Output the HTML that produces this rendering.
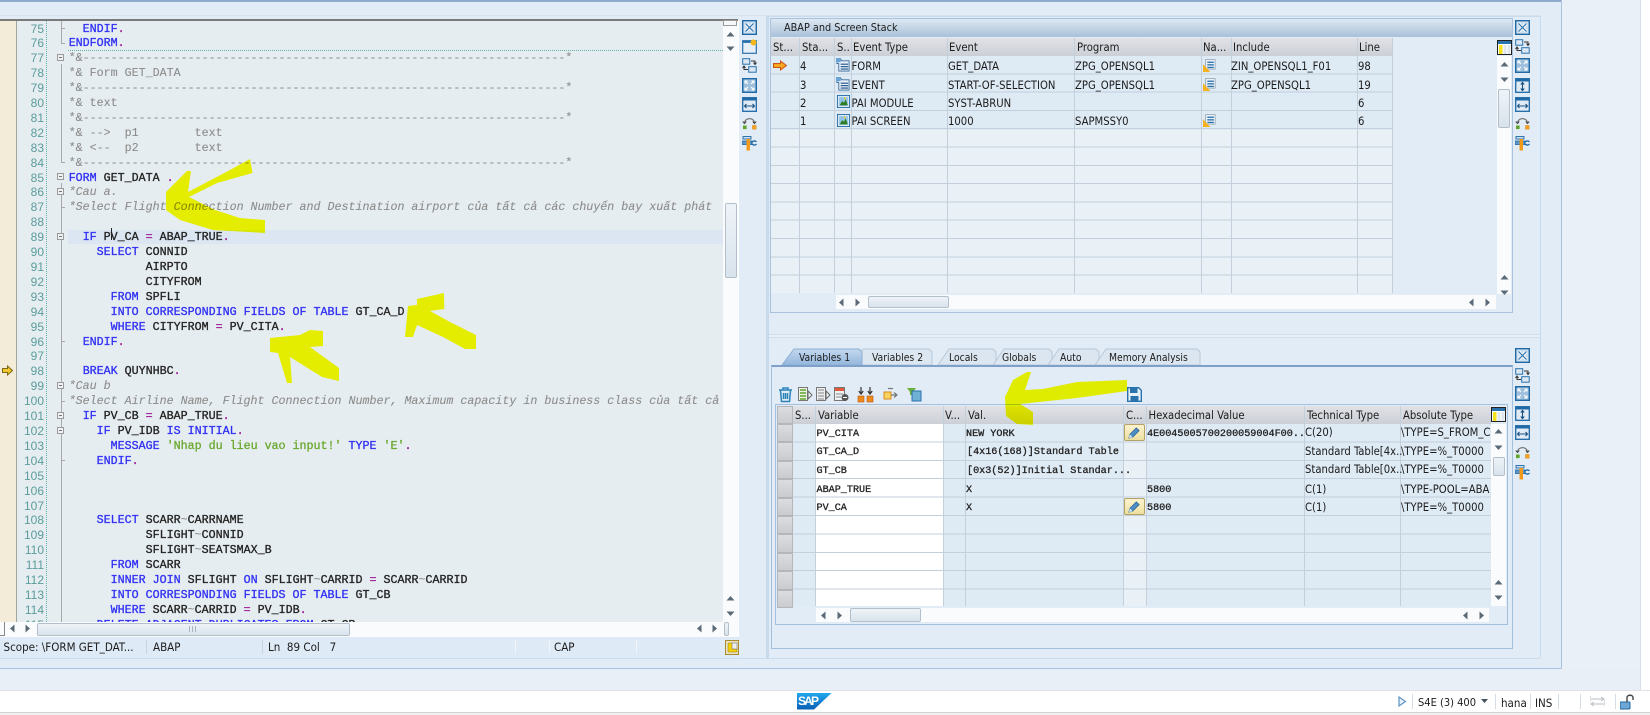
<!DOCTYPE html>
<html><head><meta charset="utf-8"><style>
html,body{margin:0;padding:0;width:1650px;height:715px;overflow:hidden;background:#fff}
body{position:relative;font-family:"DejaVu Sans Condensed","DejaVu Sans","Liberation Sans",sans-serif;font-stretch:condensed;font-size:11px;color:#222}
.a{position:absolute}
.t{position:absolute;line-height:14px;white-space:nowrap;font-size:11.2px;color:#1c1c1c}
.m{position:absolute;line-height:14px;white-space:pre;font:10.15px/14px "Liberation Mono",monospace;-webkit-text-stroke:.3px #222}
svg.i{position:absolute;width:15px;height:15px;overflow:visible}
svg.s{position:absolute;width:9px;height:9px}
pre{margin:0;font:11.67px/14.91px "Liberation Mono",monospace;color:#222;-webkit-text-stroke:.3px currentColor}
.k{color:#2f2ff5}.p{color:#a0209a}.c{color:#8c8c8c;font-style:italic;-webkit-text-stroke:.1px #8c8c8c}.h{color:#8c8c8c;-webkit-text-stroke:.1px #8c8c8c}.g{color:#6aa82e}
.btn{position:absolute;background:#f4f6f8}
.thumb{position:absolute;background:linear-gradient(#eef3f8,#d9e3ec);border:1px solid #b3c0cc;border-radius:2px;box-sizing:border-box}
.vl{position:absolute;width:1px;background:#c3cfdb}
.sel{position:absolute;left:777px;width:15.5px;height:18.4px;background:linear-gradient(#dcdde0,#c9cbd0);border:1px solid #b4b6ba;box-sizing:border-box}
.sep{position:absolute;width:1px;background:#d5dce4}
.tb{font-size:10.3px}
</style></head><body>
<svg width="0" height="0" style="position:absolute">
<defs>
<symbol id="close" viewBox="0 0 15 15"><rect x=".7" y=".7" width="13.6" height="13.6" fill="#cfe0ef" stroke="#1f69a6" stroke-width="1.4"/><path d="M3.5 3.5l8 8M11.5 3.5l-8 8" stroke="#fff" stroke-width="3"/><path d="M3.5 3.5l8 8M11.5 3.5l-8 8" stroke="#3b7db5" stroke-width="1.3"/></symbol>
<symbol id="new" viewBox="0 0 15 15"><rect x=".7" y="1.7" width="13.6" height="12.6" fill="#e6eff7" stroke="#2a72ac" stroke-width="1.2"/><rect x="1" y="1.5" width="9" height="2.4" fill="#2a72ac"/><circle cx="11.5" cy="3.5" r="3" fill="#f4b81c"/></symbol>
<symbol id="swap" viewBox="0 0 15 15"><rect x=".7" y=".7" width="7" height="5.5" fill="#dbe8f3" stroke="#2a72ac"/><rect x="6.7" y="8.7" width="7.5" height="5.5" fill="#dbe8f3" stroke="#2a72ac"/><path d="M9 3h4v3M11.5 4.500l1.500 2l1.500-2M6 11.500H2V8.500M.5 10l1.500-2l1.500 2" fill="none" stroke="#333" stroke-width="1"/></symbol>
<symbol id="fit" viewBox="0 0 15 15"><rect x=".7" y=".7" width="13.6" height="13.6" fill="#9fc0dd" stroke="#1f69a6" stroke-width="1.4"/><path d="M3 3l3 3M3 3h2.500M3 3v2.500M12 3l-3 3M12 3H9.500M12 3v2.500M3 12l3-3M3 12h2.500M3 12V9.500M12 12l-3-3M12 12H9.500M12 12V9.500" fill="none" stroke="#fff" stroke-width="1.100"/></symbol>
<symbol id="vert" viewBox="0 0 15 15"><rect x=".7" y=".7" width="13.6" height="13.6" fill="#e0ebf5" stroke="#1f69a6" stroke-width="1.300"/><rect x="1" y="1" width="13" height="2.500" fill="#1f69a6"/><path d="M7.500 5v7M5.800 6.500l1.700-2l1.700 2M5.800 10.500l1.700 2l1.700-2" fill="none" stroke="#1b4f80" stroke-width="1.100"/></symbol>
<symbol id="horiz" viewBox="0 0 15 15"><rect x=".7" y=".7" width="13.6" height="13.6" fill="#e0ebf5" stroke="#1f69a6" stroke-width="1.300"/><rect x="1" y="1" width="13" height="2.500" fill="#1f69a6"/><path d="M2.500 9h10M4.500 7l-2 2l2 2M10.500 7l2 2l-2 2" fill="none" stroke="#1b4f80" stroke-width="1.100"/></symbol>
<symbol id="head" viewBox="0 0 15 15"><path d="M2.500 7.500C2.500 1 12.500 1 12.500 7.500" fill="none" stroke="#777" stroke-width="1.200"/><path d="M.8 5.500l1.700 2l1.700-2M10.800 5.500l1.700 2l1.700-2" fill="none" stroke="#444"/><rect x="1" y="9.500" width="3.600" height="3.600" fill="#5ea52a"/><rect x="10.500" y="9.500" width="3.600" height="3.600" fill="#f6a51c" stroke="#d97c0a" stroke-width=".5"/></symbol>
<symbol id="tools" viewBox="0 0 15 15"><rect x="1" y=".5" width="8" height="2.500" fill="#cfe0ef" stroke="#1f69a6" stroke-width=".9"/><rect x="0" y="5" width="10" height="3.500" fill="#5c97c8" stroke="#1f69a6" stroke-width=".8"/><rect x="4.500" y="3" width="3.500" height="11.500" fill="#f39a1c"/><path d="M9.500 6.500c2-2 4-2 5-.5M9.500 7.500c2 2 4 2 5 .5" fill="none" stroke="#1f69a6" stroke-width="1.300"/></symbol>
<symbol id="nav" viewBox="0 0 15 15"><rect x="3" y=".7" width="11" height="11" fill="#e8eff6" stroke="#8a9aa8" stroke-width=".8"/><rect x="5" y="3" width="7.500" height="1.500" fill="#2a72ac"/><rect x="5" y="6" width="7.500" height="1.500" fill="#2a72ac"/><rect x="5" y="9" width="7.500" height="1.500" fill="#2a72ac"/><path d="M0 15V6L8.500 15z" fill="#f6b11f"/></symbol>
<symbol id="form" viewBox="0 0 15 15"><path d="M1 1h4l1 2h8v11H3V6H1z" fill="#e8eff6" stroke="#33689a" stroke-width=".9"/><path d="M0 0h5v4.500H0z" fill="#6aa3d5"/><rect x="5" y="6" width="8" height="1.300" fill="#2a5f90"/><rect x="5" y="8.600" width="8" height="1.300" fill="#2a5f90"/><rect x="5" y="11.200" width="8" height="1.300" fill="#2a5f90"/></symbol>
<symbol id="pic" viewBox="0 0 15 15"><rect x=".5" y=".5" width="14" height="14" fill="#dbe8f3" stroke="#1f69a6"/><rect x="2.500" y="2.500" width="10" height="10" fill="#8fc4e8"/><path d="M3 12l3-5l2 2l2-4l2.500 7z" fill="#2f7d22"/><rect x="8" y="3" width="2" height="2" fill="#f6d21f"/></symbol>
<symbol id="up" viewBox="0 0 9 9"><path d="M.5 6.500h8L4.500 2z" fill="#5a6a78"/></symbol>
<symbol id="dn" viewBox="0 0 9 9"><path d="M.5 2.500h8L4.500 7z" fill="#5a6a78"/></symbol>
<symbol id="lt" viewBox="0 0 9 9"><path d="M6.500.5v8L2 4.500z" fill="#5a6a78"/></symbol>
<symbol id="rt" viewBox="0 0 9 9"><path d="M2.500.5v8L7 4.500z" fill="#5a6a78"/></symbol>
<symbol id="cfg" viewBox="0 0 15 15"><rect x=".5" y=".5" width="14" height="14" fill="#fff" stroke="#222"/><rect x="1" y="1" width="13" height="3" fill="#2a72ac"/><rect x="2" y="5" width="3.500" height="9" fill="#f6e21c"/><rect x="6.500" y="5" width="3" height="9" fill="#dfe7ee"/><rect x="10.500" y="5" width="3" height="9" fill="#dfe7ee"/></symbol>
<symbol id="pen" viewBox="0 0 15 15"><path d="M2 13l1-4l7-7l3 3l-7 7z" fill="#4f8fc6" stroke="#1f5f95" stroke-width=".8"/><path d="M2 13l1-4l3 3z" fill="#dbe8f3"/></symbol>
</defs></svg>

<!-- page backgrounds -->
<div class="a" style="left:0;top:0;width:1562px;height:668px;background:#e1ecf6"></div>
<div class="a" style="left:0;top:0;width:1562px;height:2px;background:#8eaacb"></div>
<div class="a" style="left:1562px;top:0;width:78px;height:690px;background:#e9f0f7"></div>
<div class="a" style="left:1640px;top:0;width:1px;height:690px;background:#d9dfe6"></div>
<div class="a" style="left:1561px;top:0;width:1px;height:669px;background:#a9c4e0"></div>
<div class="a" style="left:0;top:668px;width:1562px;height:1px;background:#a9c4e0"></div>
<div class="a" style="left:0;top:669px;width:1640px;height:21px;background:#e8eff7"></div>
<div class="a" style="left:0;top:690px;width:1650px;height:1px;background:#dfe3e8"></div>
<div class="a" style="left:0;top:712px;width:1650px;height:1px;background:#d0d3d6"></div>
<div class="a" style="left:0;top:713px;width:1650px;height:2px;background:#f1f1f1"></div>
<div class="a" style="left:0;top:658px;width:1540px;height:1px;background:#c9dcee"></div>
<div class="a" style="left:0;top:15px;width:1540px;height:1px;background:#d5e3f0"></div>

<!-- editor -->
<div class="a" style="left:0;top:20px;width:739px;height:617px;background:#e6edf0"></div>
<div class="a" style="left:0;top:20px;width:16px;height:602px;background:#f2ecd9"></div>
<div class="a" style="left:16px;top:20px;width:1px;height:602px;background:#a5a5a0"></div>
<div class="a" style="left:0;top:19px;width:738px;height:2px;background:#7a7a7a"></div>
<div class="a" style="left:46px;top:21px;width:0;height:601px;border-left:1px dotted #5fb0ad"></div>
<div class="a" style="left:68px;top:50px;width:655px;height:0;border-top:1px dotted #5fb0ad"></div>
<div class="a" style="left:68px;top:229.500px;width:655px;height:14.500px;background:#dbe6f2"></div>

<div class="a" style="left:17px;top:21px;width:27px;height:601px;overflow:hidden">
<pre style="position:absolute;right:0;top:.5px;text-align:right;font:12px/14.91px 'Liberation Sans',sans-serif;color:#5b9c9c;-webkit-text-stroke:0">75
76
77
78
79
80
81
82
83
84
85
86
87
88
89
90
91
92
93
94
95
96
97
98
99
100
101
102
103
104
105
106
107
108
109
110
111
112
113
114
115</pre></div>

<!-- fold lines -->
<div class="a" style="left:60.500px;top:21px;width:1.500px;height:22px;background:#a9a9a9"></div>
<div class="a" style="left:60.500px;top:43px;width:4px;height:1px;background:#a9a9a9"></div>
<div class="a" style="left:62px;top:28px;width:3px;height:1px;background:#a9a9a9"></div>
<div class="a" style="left:60.500px;top:64px;width:1.500px;height:98px;background:#a9a9a9"></div>
<div class="a" style="left:60.500px;top:162px;width:4px;height:1px;background:#a9a9a9"></div>
<div class="a" style="left:60.500px;top:183px;width:1.500px;height:439px;background:#a9a9a9"></div>
<div class="a" style="left:62px;top:207px;width:3px;height:1px;background:#a9a9a9"></div>
<div class="a" style="left:62px;top:341px;width:3px;height:1px;background:#a9a9a9"></div>
<div class="a" style="left:62px;top:401px;width:3px;height:1px;background:#a9a9a9"></div>
<div class="a" style="left:62px;top:460px;width:3px;height:1px;background:#a9a9a9"></div>
<svg class="a" style="left:56px;top:0" width="10" height="440">
<g fill="#edf1f4" stroke="#9a9a9a">
<rect x="1.500" y="54.500" width="6" height="6"/><rect x="1.500" y="173.500" width="6" height="6"/><rect x="1.500" y="188.500" width="6" height="6"/><rect x="1.500" y="233.500" width="6" height="6"/><rect x="1.500" y="382.500" width="6" height="6"/><rect x="1.500" y="412.500" width="6" height="6"/><rect x="1.500" y="427.500" width="6" height="6"/></g>
<g stroke="#777"><path d="M3 57.500h3M3 176.500h3M3 191.500h3M3 236.500h3M3 385.500h3M3 415.500h3M3 430.500h3"/></g></svg>

<div class="a" style="left:68.700px;top:21px;width:654px;height:601px;overflow:hidden">
<pre style="position:absolute;left:0;top:.5px"><span class="k">  ENDIF</span><span class="p">.</span>
<span class="k">ENDFORM</span><span class="p">.</span>
<span class="h">*&amp;---------------------------------------------------------------------*</span>
<span class="h">*&amp; Form GET_DATA</span>
<span class="h">*&amp;---------------------------------------------------------------------*</span>
<span class="h">*&amp; text</span>
<span class="h">*&amp;---------------------------------------------------------------------*</span>
<span class="h">*&amp; --&gt;  p1        text</span>
<span class="h">*&amp; &lt;--  p2        text</span>
<span class="h">*&amp;---------------------------------------------------------------------*</span>
<span class="k">FORM</span> GET_DATA <span class="p">.</span>
<span class="c">*Cau a.</span>
<span class="c">*Select Flight Connection Number and Destination airport của tất cả các chuyến bay xuất phát</span>

  <span class="k">IF</span> PV_CA <span class="p">=</span> ABAP_TRUE<span class="p">.</span>
    <span class="k">SELECT</span> CONNID
           AIRPTO
           CITYFROM
      <span class="k">FROM</span> SPFLI
      <span class="k">INTO CORRESPONDING FIELDS OF TABLE</span> GT_CA_D
      <span class="k">WHERE</span> CITYFROM <span class="p">=</span> PV_CITA<span class="p">.</span>
  <span class="k">ENDIF</span><span class="p">.</span>

  <span class="k">BREAK</span> QUYNHBC<span class="p">.</span>
<span class="c">*Cau b</span>
<span class="c">*Select Airline Name, Flight Connection Number, Maximum capacity in business class của tất cả</span>
  <span class="k">IF</span> PV_CB <span class="p">=</span> ABAP_TRUE<span class="p">.</span>
    <span class="k">IF</span> PV_IDB <span class="k">IS INITIAL</span><span class="p">.</span>
      <span class="k">MESSAGE</span> <span class="g">'Nhap du lieu vao input!'</span> <span class="k">TYPE</span> <span class="g">'E'</span><span class="p">.</span>
    <span class="k">ENDIF</span><span class="p">.</span>



    <span class="k">SELECT</span> SCARR<span class="h">~</span>CARRNAME
           SFLIGHT<span class="h">~</span>CONNID
           SFLIGHT<span class="h">~</span>SEATSMAX_B
      <span class="k">FROM</span> SCARR
      <span class="k">INNER JOIN</span> SFLIGHT <span class="k">ON</span> SFLIGHT<span class="h">~</span>CARRID <span class="p">=</span> SCARR<span class="h">~</span>CARRID
      <span class="k">INTO CORRESPONDING FIELDS OF TABLE</span> GT_CB
      <span class="k">WHERE</span> SCARR<span class="h">~</span>CARRID <span class="p">=</span> PV_IDB<span class="p">.</span>
    <span class="k">DELETE ADJACENT DUPLICATES FROM</span> GT_CB</pre></div>

<div class="a" style="left:110.500px;top:228px;width:1px;height:12px;background:#222"></div>
<svg class="a" style="left:2px;top:365px" width="11" height="11"><path d="M.5 3.500h5V1l5 4.500l-5 4.500V7.500h-5z" fill="#f2c72b" stroke="#7a6a18"/></svg>

<!-- editor scrollbars -->
<div class="a" style="left:723px;top:21px;width:15px;height:601px;background:#fafbfc"></div>
<div class="a" style="left:723px;top:20px;width:14px;height:6px;background:#f6f8fa;border:1px solid #9a9a9a;box-sizing:border-box"></div>
<svg class="s" style="left:726px;top:30px"><use href="#up"/></svg>
<svg class="s" style="left:726px;top:44px"><use href="#dn"/></svg>
<div class="thumb" style="left:725px;top:203px;width:12px;height:75px"></div>
<svg class="s" style="left:726px;top:594px"><use href="#up"/></svg>
<svg class="s" style="left:726px;top:609px"><use href="#dn"/></svg>
<div class="a" style="left:0;top:622px;width:738px;height:15px;background:#fafbfc"></div>
<div class="a" style="left:0;top:622px;width:5px;height:14px;border-right:1px solid #888;border-bottom:1px solid #888;box-sizing:border-box"></div>
<svg class="s" style="left:8px;top:624px"><use href="#lt"/></svg>
<svg class="s" style="left:23px;top:624px"><use href="#rt"/></svg>
<div class="thumb" style="left:37px;top:623px;width:313px;height:13px"></div>
<div class="a" style="left:189px;top:626px;width:8px;height:6px;background:repeating-linear-gradient(90deg,#aab4bd 0 1px,transparent 1px 3px)"></div>
<svg class="s" style="left:695px;top:624px"><use href="#lt"/></svg>
<svg class="s" style="left:710px;top:624px"><use href="#rt"/></svg>
<div class="thumb" style="left:724px;top:622px;width:5px;height:14px"></div>
<div class="a" style="left:738px;top:20px;width:1px;height:617px;background:#fff"></div>

<!-- editor status -->
<div class="a" style="left:0;top:637px;width:739px;height:21px;background:#deeaf5"></div>
<span class="t" style="left:3.500px;top:640px;font-size:11.500px">Scope: \FORM GET_DAT...</span>
<span class="t" style="left:153px;top:640px;font-size:11.500px">ABAP</span>
<span class="t" style="left:268px;top:640px;font-size:11.500px;white-space:pre">Ln  89 Col   7</span>
<span class="t" style="left:554px;top:640px;font-size:11.500px">CAP</span>
<div class="sep" style="left:146px;top:640px;height:14px;background:#c9d6e2"></div>
<div class="sep" style="left:262px;top:640px;height:14px;background:#c9d6e2"></div>
<div class="sep" style="left:515px;top:640px;height:14px;background:#f1f5f9"></div>
<div class="sep" style="left:549px;top:640px;height:14px;background:#f1f5f9"></div>
<div class="sep" style="left:636px;top:640px;height:14px;background:#f1f5f9"></div>
<svg class="a" style="left:725px;top:640px" width="14" height="15"><rect x=".5" y=".5" width="13" height="14" fill="#e9e3c4" stroke="#a88c2c"/><path d="M3 3h5v6h4v3H3z" fill="#f7d000" stroke="#8a7a20" stroke-width=".5"/><rect x="7" y="3" width="5" height="6" fill="#eee" stroke="#777" stroke-width=".6"/></svg>

<!-- left toolbar -->
<svg class="i" style="left:742px;top:20px"><use href="#close"/></svg>
<svg class="i" style="left:742px;top:39px"><use href="#new"/></svg>
<svg class="i" style="left:742px;top:58px"><use href="#swap"/></svg>
<svg class="i" style="left:742px;top:78px"><use href="#fit"/></svg>
<svg class="i" style="left:742px;top:97px"><use href="#horiz"/></svg>
<svg class="i" style="left:742px;top:116px"><use href="#head"/></svg>
<svg class="i" style="left:742px;top:136px"><use href="#tools"/></svg>

<!-- splitters -->
<div class="a" style="left:766px;top:16px;width:3px;height:642px;background:#c7daec"></div>
<div class="a" style="left:769px;top:16px;width:771px;height:1px;background:#c9dcee"></div>
<div class="a" style="left:1540px;top:16px;width:1px;height:642px;background:#c9dcee"></div>
<div class="a" style="left:769px;top:334px;width:771px;height:1px;background:#cfdfee"></div>
<div class="a" style="left:769px;top:337px;width:771px;height:1px;background:#cfdfee"></div>
<div class="a" style="left:769px;top:335px;width:771px;height:2px;background:#e8f0f7"></div>

<!-- stack panel -->
<div class="a" style="left:770px;top:18px;width:743px;height:295px;border:1px solid #a9c3de;box-sizing:border-box"></div>
<div class="a" style="left:771px;top:19px;width:741px;height:18px;background:linear-gradient(#dde8f2,#a9c1d9)"></div>
<span class="t" style="left:784px;top:20.500px;font-size:10.800px">ABAP and Screen Stack</span>
<div class="a" style="left:771px;top:38px;width:621px;height:18px;background:linear-gradient(#e0e2e6,#ccd0d6)"></div>
<div class="a" style="left:771px;top:56px;width:621px;height:74px;background:#deeaf4"></div>
<div class="a" style="left:771px;top:130px;width:621px;height:163px;background:#e9f0f6"></div>
<div class="a" style="left:771px;top:56px;width:621px;height:237px;background:repeating-linear-gradient(to bottom,transparent 0,transparent 17.300px,#c3cfdb 17.300px,#c3cfdb 18.300px)"></div>
<div class="vl" style="left:799px;top:38px;height:255px"></div>
<div class="vl" style="left:834px;top:38px;height:255px"></div>
<div class="vl" style="left:851px;top:38px;height:255px"></div>
<div class="vl" style="left:947px;top:38px;height:255px"></div>
<div class="vl" style="left:1074px;top:38px;height:255px"></div>
<div class="vl" style="left:1201px;top:38px;height:255px"></div>
<div class="vl" style="left:1231px;top:38px;height:255px"></div>
<div class="vl" style="left:1357px;top:38px;height:255px"></div>
<div class="vl" style="left:1392px;top:38px;height:255px"></div>

<span class="t" style="left:773px;top:40.500px">St...</span>
<span class="t" style="left:802px;top:40.500px">Sta...</span>
<span class="t" style="left:837px;top:40.500px">S..</span>
<span class="t" style="left:853px;top:40.500px">Event Type</span>
<span class="t" style="left:949px;top:40.500px">Event</span>
<span class="t" style="left:1077px;top:40.500px">Program</span>
<span class="t" style="left:1203px;top:40.500px">Na...</span>
<span class="t" style="left:1233px;top:40.500px">Include</span>
<span class="t" style="left:1359px;top:40.500px">Line</span>

<svg class="a" style="left:773px;top:60px" width="14" height="11"><path d="M.5 3.500h7V1l6 4.500l-6 4.500V7.500h-7z" fill="#f7a71d" stroke="#c9541a"/></svg>
<span class="t" style="left:800px;top:60px">4</span><span class="t" style="left:800px;top:78.500px">3</span><span class="t" style="left:800px;top:97px">2</span><span class="t" style="left:800px;top:115px">1</span>
<svg class="i" style="left:836px;top:58px;width:14px;height:14px"><use href="#form"/></svg>
<svg class="i" style="left:836px;top:76.500px;width:14px;height:14px"><use href="#form"/></svg>
<svg class="i" style="left:836.500px;top:95px;width:13px;height:13px"><use href="#pic"/></svg>
<svg class="i" style="left:836.500px;top:113.500px;width:13px;height:13px"><use href="#pic"/></svg>
<span class="t" style="left:851.500px;top:60px">FORM</span><span class="t" style="left:851.500px;top:78.500px">EVENT</span><span class="t" style="left:851.500px;top:97px">PAI MODULE</span><span class="t" style="left:851.500px;top:115px">PAI SCREEN</span>
<span class="t" style="left:948px;top:60px">GET_DATA</span><span class="t" style="left:948px;top:78.500px">START-OF-SELECTION</span><span class="t" style="left:948px;top:97px">SYST-ABRUN</span><span class="t" style="left:948px;top:115px">1000</span>
<span class="t" style="left:1075px;top:60px">ZPG_OPENSQL1</span><span class="t" style="left:1075px;top:78.500px">ZPG_OPENSQL1</span><span class="t" style="left:1075px;top:115px">SAPMSSY0</span>
<svg class="i" style="left:1203px;top:59px;width:13px;height:13px"><use href="#nav"/></svg>
<svg class="i" style="left:1203px;top:77.500px;width:13px;height:13px"><use href="#nav"/></svg>
<svg class="i" style="left:1203px;top:114px;width:13px;height:13px"><use href="#nav"/></svg>
<span class="t" style="left:1231px;top:60px">ZIN_OPENSQL1_F01</span><span class="t" style="left:1231px;top:78.500px">ZPG_OPENSQL1</span>
<span class="t" style="left:1358px;top:60px">98</span><span class="t" style="left:1358px;top:78.500px">19</span><span class="t" style="left:1358px;top:97px">6</span><span class="t" style="left:1358px;top:115px">6</span>

<!-- stack scrollbars -->
<div class="a" style="left:1497px;top:56px;width:14px;height:238px;background:#fafbfc"></div>
<svg class="i" style="left:1497px;top:40px"><use href="#cfg"/></svg>
<svg class="s" style="left:1499.500px;top:60px"><use href="#up"/></svg>
<svg class="s" style="left:1499.500px;top:75px"><use href="#dn"/></svg>
<div class="thumb" style="left:1498px;top:89px;width:12px;height:39px"></div>
<svg class="s" style="left:1499.500px;top:273px"><use href="#up"/></svg>
<svg class="s" style="left:1499.500px;top:288px"><use href="#dn"/></svg>
<div class="a" style="left:836px;top:295px;width:660px;height:14px;background:#fafbfc"></div>
<svg class="s" style="left:837px;top:297.500px"><use href="#lt"/></svg>
<svg class="s" style="left:853px;top:297.500px"><use href="#rt"/></svg>
<div class="thumb" style="left:868px;top:296px;width:81px;height:12px"></div>
<svg class="s" style="left:1467px;top:297.500px"><use href="#lt"/></svg>
<svg class="s" style="left:1483px;top:297.500px"><use href="#rt"/></svg>

<!-- right toolbar 1 -->
<svg class="i" style="left:1515px;top:20px"><use href="#close"/></svg>
<svg class="i" style="left:1515px;top:39px"><use href="#swap"/></svg>
<svg class="i" style="left:1515px;top:58px"><use href="#fit"/></svg>
<svg class="i" style="left:1515px;top:78px"><use href="#vert"/></svg>
<svg class="i" style="left:1515px;top:97px"><use href="#horiz"/></svg>
<svg class="i" style="left:1515px;top:116px"><use href="#head"/></svg>
<svg class="i" style="left:1515px;top:136px"><use href="#tools"/></svg>

<!-- tabs -->
<svg class="a" style="left:770px;top:345px" width="445" height="22">
<defs><linearGradient id="tb" x1="0" x2="0" y1="0" y2="1"><stop offset="0" stop-color="#c3d8ee"/><stop offset="1" stop-color="#93b7dc"/></linearGradient></defs>
<path d="M92 20L103 4h66l3 3v13z" transform="translate(-10 0)" fill="#dbe6f0" stroke="#b7c9db"/>
<path d="M168 20l11-16h44l3 3v13z" fill="#dbe6f0" stroke="#b7c9db"/>
<path d="M223 20l11-16h45l3 3v13z" fill="#dbe6f0" stroke="#b7c9db"/>
<path d="M278 20l11-16h37l3 3v13z" fill="#dbe6f0" stroke="#b7c9db"/>
<path d="M325 20l11-16h91l3 3v13z" fill="#dbe6f0" stroke="#b7c9db"/>
<path d="M12 20L24 4h65l3 3v13z" fill="url(#tb)" stroke="#8fb0d2"/>
</svg>
<div class="a" style="left:771px;top:365px;width:742px;height:284px;border:1px solid #a3bfdb;border-top:2px solid #7fa1c9;box-sizing:border-box"></div>
<span class="t tb" style="left:799px;top:351px">Variables 1</span>
<span class="t tb" style="left:872px;top:351px">Variables 2</span>
<span class="t tb" style="left:949px;top:351px">Locals</span>
<span class="t tb" style="left:1002px;top:351px">Globals</span>
<span class="t tb" style="left:1060px;top:351px">Auto</span>
<span class="t tb" style="left:1109px;top:351px">Memory Analysis</span>

<!-- var toolbar -->
<svg class="i" style="left:778px;top:387px"><path d="M1 3h13M5 3V1h5v2M2.500 3.500l1 11h8l1-11M5.500 6v6M7.500 6v6M9.500 6v6" fill="none" stroke="#2b83b8" stroke-width="1.500"/></svg>
<svg class="i" style="left:798px;top:387px"><rect x=".5" y=".5" width="9" height="13" fill="#eef3e8" stroke="#777"/><path d="M2 3h6M2 6h6M2 9h6M2 12h6" stroke="#5ea52a" stroke-width="1.500"/><path d="M10 4v8l4-4z" fill="#eef3f7" stroke="#666"/></svg>
<svg class="i" style="left:816px;top:387px"><rect x=".5" y=".5" width="9" height="13" fill="#eef1f3" stroke="#777"/><path d="M2 3h6M2 6h6M2 9h6M2 12h6" stroke="#999" stroke-width="1.200"/><path d="M10 4v8l4-4z" fill="#eef3f7" stroke="#666"/></svg>
<svg class="i" style="left:834px;top:387px"><rect x=".5" y=".5" width="10" height="13" fill="#eef3f7" stroke="#777"/><rect x="1" y="1" width="9" height="3" fill="#e25a3a"/><path d="M2 7h7M2 10h5" stroke="#888"/><circle cx="11" cy="10.500" r="3.500" fill="#555"/><path d="M9 10.500h4" stroke="#fff"/></svg>
<svg class="i" style="left:858px;top:387px"><rect x="0" y="9" width="6" height="6" fill="#ee8a1c" stroke="#b9540f" stroke-width=".6"/><rect x="9" y="9" width="6" height="6" fill="#ee8a1c" stroke="#b9540f" stroke-width=".6"/><path d="M3 0v6M.8 4l2.200 3l2.200-3M12 0v6M9.800 4l2.200 3l2.200-3" fill="none" stroke="#333" stroke-width="1.200"/></svg>
<svg class="i" style="left:883px;top:387px"><rect x="1" y="5" width="7" height="7" fill="#f7d25c" stroke="#d98b1c"/><path d="M8 8h6M11 5.500l3 2.500l-3 2.500M5 1.500h5" fill="none" stroke="#777" stroke-width="1.200"/></svg>
<svg class="i" style="left:907px;top:387px"><path d="M0 1h9L6 5v3H3V5z" fill="#6bb03a"/><rect x="5" y="4" width="9" height="10" fill="#6fb1d4" stroke="#2a72ac"/></svg>
<svg class="i" style="left:1127px;top:387px"><path d="M.7.7h11l2.600 2.600v11H.7z" fill="#e6f0f8" stroke="#2a72ac" stroke-width="1.400"/><rect x="3" y="1" width="7.500" height="5" fill="#2a72ac"/><rect x="3.500" y="9" width="8" height="5" fill="#2a72ac"/></svg>

<!-- var table -->
<div class="a" style="left:775px;top:404px;width:733px;height:220.500px;border:1px solid #a3bfdb;box-sizing:border-box"></div>
<div class="a" style="left:793px;top:406px;width:698px;height:18px;background:linear-gradient(#e0e2e6,#ccd0d6)"></div>
<div class="sel" style="top:405.600px"></div>
<div class="a" style="left:793px;top:424px;width:698px;height:182px;background:#deeaf4"></div>
<div class="a" style="left:816px;top:424px;width:127px;height:182px;background:#fff"></div>
<div class="a" style="left:1123px;top:424px;width:23px;height:182px;background:#e9f0f6"></div>
<div class="a" style="left:793px;top:424px;width:698px;height:182px;background:repeating-linear-gradient(to bottom,transparent 0,transparent 17.400px,#c3cfdb 17.400px,#c3cfdb 18.400px)"></div>
<div class="vl" style="left:815px;top:406px;height:200px"></div>
<div class="vl" style="left:943px;top:406px;height:200px"></div>
<div class="vl" style="left:965px;top:406px;height:200px"></div>
<div class="vl" style="left:1123px;top:406px;height:200px"></div>
<div class="vl" style="left:1146px;top:406px;height:200px"></div>
<div class="vl" style="left:1304px;top:406px;height:200px"></div>
<div class="vl" style="left:1400px;top:406px;height:200px"></div>

<div class="sel" style="top:424px"></div><div class="sel" style="top:442.400px"></div><div class="sel" style="top:460.800px"></div><div class="sel" style="top:479.200px"></div><div class="sel" style="top:497.600px"></div><div class="sel" style="top:516px"></div><div class="sel" style="top:534.400px"></div><div class="sel" style="top:552.800px"></div><div class="sel" style="top:571.200px"></div><div class="sel" style="top:589.600px"></div>

<span class="t" style="left:795px;top:409px">S...</span>
<span class="t" style="left:818px;top:409px">Variable</span>
<span class="t" style="left:945px;top:409px">V...</span>
<span class="t" style="left:968px;top:409px">Val.</span>
<span class="t" style="left:1126px;top:409px">C...</span>
<span class="t" style="left:1148.500px;top:409px">Hexadecimal Value</span>
<span class="t" style="left:1307px;top:409px">Technical Type</span>
<span class="t" style="left:1403px;top:409px">Absolute Type</span>

<span class="m" style="left:816.500px;top:428px">PV_CITA</span>
<span class="m" style="left:816.500px;top:446px">GT_CA_D</span>
<span class="m" style="left:816.500px;top:465px">GT_CB</span>
<span class="m" style="left:816.500px;top:484px">ABAP_TRUE</span>
<span class="m" style="left:816.500px;top:502px">PV_CA</span>
<span class="m" style="left:966px;top:428px">NEW YORK</span>
<span class="m" style="left:967px;top:446px">[4x16(168)]Standard Table</span>
<span class="m" style="left:967px;top:465px">[0x3(52)]Initial Standar...</span>
<span class="m" style="left:966px;top:484px">X</span>
<span class="m" style="left:966px;top:502px">X</span>
<span class="m" style="left:1147px;top:428px">4E0045005700200059004F00..</span>
<span class="m" style="left:1147px;top:484px">5800</span>
<span class="m" style="left:1147px;top:502px">5800</span>

<div class="a" style="left:1124px;top:424px;width:21px;height:17px;background:linear-gradient(#fbf3d0,#eedf9f);border:1px solid #b5a264;border-radius:2px;box-sizing:border-box"></div>
<svg class="i" style="left:1127px;top:425.500px;width:14px;height:14px"><use href="#pen"/></svg>
<div class="a" style="left:1124px;top:498px;width:21px;height:17px;background:linear-gradient(#fbf3d0,#eedf9f);border:1px solid #b5a264;border-radius:2px;box-sizing:border-box"></div>
<svg class="i" style="left:1127px;top:499.500px;width:14px;height:14px"><use href="#pen"/></svg>

<span class="t" style="left:1305px;top:426px">C(20)</span>
<span class="t" style="left:1305px;top:445px">Standard Table[4x..</span>
<span class="t" style="left:1305px;top:463px">Standard Table[0x..</span>
<span class="t" style="left:1305px;top:482.500px">C(1)</span>
<span class="t" style="left:1305px;top:501px">C(1)</span>
<div class="a" style="left:1401px;top:424px;width:89px;height:92px;overflow:hidden">
<span class="t" style="left:0;top:2px">\TYPE=S_FROM_CITY</span>
<span class="t" style="left:0;top:21px">\TYPE=%_T0000</span>
<span class="t" style="left:0;top:39px">\TYPE=%_T0000</span>
<span class="t" style="left:0;top:58.500px">\TYPE-POOL=ABAP</span>
<span class="t" style="left:0;top:77px">\TYPE=%_T0000</span>
</div>

<!-- var scrollbars -->
<div class="a" style="left:1491px;top:424px;width:15px;height:182px;background:#fafbfc"></div>
<svg class="i" style="left:1491px;top:407px"><use href="#cfg"/></svg>
<svg class="s" style="left:1493.500px;top:427px"><use href="#up"/></svg>
<svg class="s" style="left:1493.500px;top:443px"><use href="#dn"/></svg>
<div class="thumb" style="left:1492.500px;top:457px;width:12px;height:19px"></div>
<svg class="s" style="left:1493.500px;top:578px"><use href="#up"/></svg>
<svg class="s" style="left:1493.500px;top:593px"><use href="#dn"/></svg>
<div class="a" style="left:816px;top:608px;width:673px;height:14px;background:#fafbfc"></div>
<svg class="s" style="left:819px;top:610.500px"><use href="#lt"/></svg>
<svg class="s" style="left:835px;top:610.500px"><use href="#rt"/></svg>
<div class="thumb" style="left:850px;top:608px;width:71px;height:14px"></div>
<svg class="s" style="left:1461px;top:610.500px"><use href="#lt"/></svg>
<svg class="s" style="left:1477px;top:610.500px"><use href="#rt"/></svg>

<!-- right toolbar 2 -->
<svg class="i" style="left:1515px;top:348px"><use href="#close"/></svg>
<svg class="i" style="left:1515px;top:368px"><use href="#swap"/></svg>
<svg class="i" style="left:1515px;top:386px"><use href="#fit"/></svg>
<svg class="i" style="left:1515px;top:406px"><use href="#vert"/></svg>
<svg class="i" style="left:1515px;top:425px"><use href="#horiz"/></svg>
<svg class="i" style="left:1515px;top:445px"><use href="#head"/></svg>
<svg class="i" style="left:1515px;top:465px"><use href="#tools"/></svg>

<!-- yellow marker arrows -->
<svg class="a" style="left:0;top:0;mix-blend-mode:multiply" width="1650" height="715">
<g fill="#fdff00">
<polygon points="250,159 252.500,173 217,183 189,197 215,210 240,218 265,220 265,233 213,230 180,220 166,210 166,192 187,171 191,171 188,192 230,170"/>
<polygon points="405,337 408,306 417,305 417,299 444,293 444.300,309 430,311 450,322 476,335 476,349 465,349 443,337 417,325 413,337"/>
<polygon points="270,338 300,335 310,330 323,331 323,346 310,347 339,368 339,381 322,377 290,357 292,383 287,383 278,353 270,352"/>
<polygon points="1027,372 1031,372 1025,390 1043,389 1077,382 1127,380 1127,391 1077,398 1020,404 1033,412 1033,425 1017,424 1006,416 1005,397 1013,380"/>
</g></svg>

<!-- bottom status -->
<svg class="a" style="left:797px;top:693px" width="35" height="17"><defs><linearGradient id="sapb" x1="0" x2="0" y1="0" y2="1"><stop offset="0" stop-color="#1fa8ee"/><stop offset="1" stop-color="#0a5fb4"/></linearGradient></defs><path d="M0 0h34.500L17 16.500H0z" fill="url(#sapb)"/><text x="1" y="12" font-family="Liberation Sans" font-weight="bold" font-size="12" fill="#fff" textLength="21">SAP</text></svg>
<svg class="a" style="left:1398px;top:696px" width="9" height="11"><path d="M1 1v9l6.500-4.500z" fill="#e8f0f8" stroke="#5f94c4" stroke-width="1.200"/></svg>
<div class="sep" style="left:1412px;top:694px;height:15px"></div>
<span class="t" style="left:1418px;top:696px;font-size:11px">S4E (3) 400</span>
<svg class="s" style="left:1480px;top:697px"><path d="M1 2h7L4.500 6z" fill="#44505c"/></svg>
<div class="sep" style="left:1495px;top:694px;height:15px"></div>
<span class="t" style="left:1501px;top:696px;font-size:11.500px">hana</span>
<div class="sep" style="left:1530px;top:694px;height:15px"></div>
<span class="t" style="left:1535px;top:696px;font-size:11.500px">INS</span>
<div class="sep" style="left:1558px;top:694px;height:15px"></div>
<div class="sep" style="left:1580px;top:694px;height:15px"></div>
<svg class="a" style="left:1590px;top:695px" width="15" height="12"><path d="M0 1v6M15 5v6M1 4h13M11 2l3 2l-3 2M1 9h13M4 7l-3 2l3 2" fill="none" stroke="#b9bec4" stroke-width="1"/></svg>
<div class="sep" style="left:1615px;top:694px;height:15px"></div>
<svg class="a" style="left:1620px;top:694px" width="15" height="16"><rect x="0" y="8" width="10" height="7" rx="1" fill="#6ea6d4" stroke="#1f69a6"/><path d="M7 8V3.500C7 .500 13 .500 13 3.500V6" fill="none" stroke="#444" stroke-width="1.400"/></svg>
</body></html>
